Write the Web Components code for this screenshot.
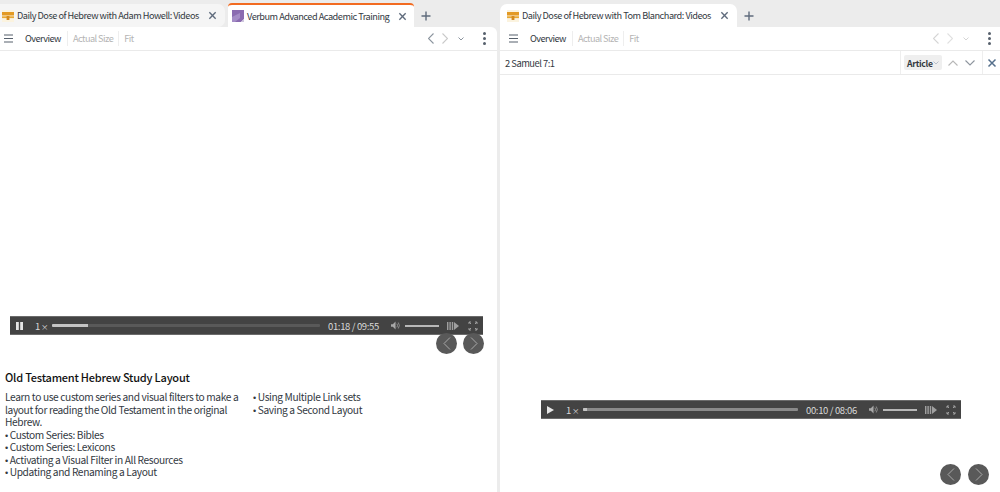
<!DOCTYPE html>
<html>
<head>
<meta charset="utf-8">
<title>Verbum</title>
<style>
  html, body { margin: 0; height: 100%; overflow: hidden; background: #fff; }
  body { font-family: "Noto Sans CJK SC", "Noto Sans", sans-serif; font-size: 10px; color: #333; }
  #app { display: flex; width: 1000px; height: 492px; background: #ececec; }
</style>
</head>
<body>
<div id="app">
  <doc-pane style="width:497px">
    <tab-strip slot="tabs">
      <app-tab icon="book" kind="back" style="width:225px">Daily Dose of Hebrew with Adam Howell: Videos</app-tab>
      <app-tab icon="verbum" kind="accent" style="width:186px">Verbum Advanced Academic Training</app-tab>
    </tab-strip>
    <pane-toolbar round></pane-toolbar>
    <left-content></left-content>
  </doc-pane>
  <pane-split></pane-split>
  <doc-pane style="width:500px">
    <tab-strip slot="tabs">
      <app-tab icon="book" kind="front" style="width:237px">Daily Dose of Hebrew with Tom Blanchard: Videos</app-tab>
    </tab-strip>
    <pane-toolbar dim></pane-toolbar>
    <ref-bar>2 Samuel 7:1</ref-bar>
    <right-content></right-content>
  </doc-pane>
</div>
<script>
// small helper so every component gets an open shadow root from a string
class Base extends HTMLElement {
  constructor() {
    super();
    this.attachShadow({ mode: 'open' });
  }
  connectedCallback() {
    this.shadowRoot.innerHTML = this.render();
  }
}

const closeX = (c, s) => `<svg width="${s}" height="${s}" viewBox="0 0 10 10" fill="none" stroke="${c}" stroke-width="1.5"><path d="M1.5 1.5l7 7M8.5 1.5l-7 7"/></svg>`;

class DocPane extends Base {
  render() {
    return `<style>
      :host { display: flex; flex-direction: column; height: 100%; min-width: 0; background: #ececec; }
    </style><slot name="tabs"></slot><slot></slot>`;
  }
}

class PaneSplit extends Base {
  render() {
    return `<style>:host { display: block; width: 3px; height: 100%; background: #ececec; }</style>`;
  }
}

class TabStrip extends Base {
  render() {
    return `<style>
      :host { display: flex; align-items: flex-end; gap: 3px; height: 27px; background: #ececec; flex: none; }
      .plus { width: 23px; height: 23px; margin-left: -3px; display: flex; align-items: center; justify-content: center; }
    </style><slot></slot>
    <div class="plus"><svg width="10" height="10" viewBox="0 0 10 10" fill="none" stroke="#5f6b7c" stroke-width="1.4"><path d="M5 .5v9M.5 5h9"/></svg></div>`;
  }
}

class AppTab extends Base {
  render() {
    const kind = this.getAttribute('kind');
    const icon = this.getAttribute('icon') === 'book'
      ? `<svg class="i" width="12" height="12" viewBox="0 0 12 12"><rect width="12" height="12" fill="#fbf3df"/><rect y="2" width="12" height="3.5" fill="#e39a24"/><rect y="6.3" width="12" height="1.8" fill="#e8a834"/><rect x="4.6" y="6" width="2.8" height="4" fill="#d58a1c"/></svg>`
      : `<svg class="i" width="12" height="12" viewBox="0 0 12 12"><path d="M0 0h12v9l-3 3H0z" fill="#8a6bb0"/><path d="M0 7l8-4v5L3 12H0z" fill="#a48cc6"/><path d="M9 12l3-3v3z" fill="#cfc7dd"/></svg>`;
    const box = {
      back: 'background:#f5f5f5; padding:0 8px 0 2px; border-radius:0 7px 7px 0; height:23px;',
      accent: 'background:#fff; padding:0 7px 0 4px; border-radius:4px 4px 0 0; height:24px; border-top:2.5px solid #f26b21;',
      front: 'background:#fff; padding:0 8px 0 7px; border-radius:7px 7px 0 0; height:23px;'
    }[kind];
    return `<style>
      :host { display: flex; align-items: center; box-sizing: border-box; flex: none; color: #33393f; white-space: nowrap; ${box} }
      .i { flex: none; }
      .t { flex: 1; margin: -1px 0 0 3px; font-size: 9.2px; letter-spacing: -.49px; }
      .x { display: flex; }
    </style>${icon}<span class="t"><slot></slot></span><span class="x">${closeX('#5f6b7c', 9)}</span>`;
  }
}

class PaneToolbar extends Base {
  render() {
    const dim = this.hasAttribute('dim');
    const c = dim ? '#d5d5d5' : '#8b949e';
    const c2 = dim ? '#e0e0e0' : '#c9c9c9';
    return `<style>
      :host { display: flex; align-items: center; height: 24px; flex: none; box-sizing: border-box; background: #fff; border-bottom: 1px solid #eaeaea; padding-left: ${dim ? 9 : 4}px; font-size: 9.2px; letter-spacing: -.55px; }
      :host([round]) { border-top-right-radius: 6px; }
      .menu { display: flex; margin-right: 12px; }
      .o { color: #33393f; padding-right: 6px; border-right: 1px solid #eee; height: 15px; line-height: 15px; }
      .d { color: #b4b4b4; padding: 0 5px; border-right: 1px solid #eee; height: 15px; line-height: 15px; }
      .e { border: 0; }
      .sp { flex: 1; }
      .nav { display: flex; align-items: center; gap: 8px; margin-right: 19px; }
      .dots { display: flex; flex-direction: column; gap: 2px; margin-right: ${dim ? 9.5 : 11}px; }
      .dots i { width: 3px; height: 3px; border-radius: 50%; background: #56606c; }
    </style>
    <span class="menu"><svg width="9" height="9" viewBox="0 0 9 9" stroke="#56606c" stroke-width="1.2"><path d="M0 1h9M0 4.5h9M0 8h9"/></svg></span>
    <span class="o">Overview</span><span class="d">Actual Size</span><span class="d e">Fit</span>
    <span class="sp"></span>
    <span class="nav">
      <svg width="6" height="11" viewBox="0 0 6 11" fill="none" stroke="${c}" stroke-width="1.1"><path d="M5.5 .5l-5 5 5 5"/></svg>
      <svg width="6" height="11" viewBox="0 0 6 11" fill="none" stroke="${c2}" stroke-width="1.1"><path d="M.5 .5l5 5-5 5"/></svg>
      <svg style="margin-left:2px" width="6" height="4" viewBox="0 0 6 4" fill="none" stroke="${c}" stroke-width="1"><path d="M.5 .5l2.5 2.5 2.5-2.5"/></svg>
    </span>
    <span class="dots"><i></i><i></i><i></i></span>`;
  }
}

class RefBar extends Base {
  render() {
    return `<style>
      :host { display: flex; align-items: center; height: 24px; flex: none; box-sizing: border-box; background: #fff; border-bottom: 1px solid #eaeaea; padding-left: 5px; font-size: 9.4px; letter-spacing: -.5px; color: #33393f; }
      .t { flex: 1; }
      .r { display: flex; align-items: center; height: 100%; border-left: 1px solid #eee; padding-left: 3px; }
      .pick { display: flex; align-items: center; justify-content: space-between; box-sizing: border-box; width: 38px; height: 15px; padding: 0 3px; border-radius: 2px; background: #efefef; font-size: 8.6px; font-weight: 700; letter-spacing: -.3px; color: #33393f; }
      .ar { display: flex; gap: 7px; margin: 0 7px 0 6px; }
      .x { display: flex; align-items: center; justify-content: center; width: 17px; height: 100%; border-left: 1px solid #eee; }
    </style>
    <span class="t"><slot></slot></span>
    <span class="r">
      <span class="pick">Article <svg width="6" height="4" viewBox="0 0 6 4" fill="none" stroke="#b9c0cc" stroke-width="1"><path d="M.5 .5l2.5 2.5 2.5-2.5"/></svg></span>
      <span class="ar">
        <svg width="10" height="6" viewBox="0 0 10 6" fill="none" stroke="#b7b7b7" stroke-width="1.1"><path d="M.5 5.5l4.5-4.5 4.5 4.5"/></svg>
        <svg width="10" height="6" viewBox="0 0 10 6" fill="none" stroke="#8e959e" stroke-width="1.1"><path d="M.5 .5l4.5 4.5 4.5-4.5"/></svg>
      </span>
      <span class="x">${closeX('#56708c', 10)}</span>
    </span>`;
  }
}

class VideoBar extends Base {
  render() {
    const play = this.hasAttribute('playing')
      ? `<svg width="7" height="8" viewBox="0 0 7 8" fill="#e6e6e6"><rect width="2.8" height="8"/><rect x="4.2" width="2.8" height="8"/></svg>`
      : `<svg width="7" height="8" viewBox="0 0 7 8" fill="#e6e6e6"><path d="M0 0l7 4-7 4z"/></svg>`;
    const pct = this.getAttribute('pct');
    const buffered = this.hasAttribute('buffered') ? '#8a8a8a' : '#595959';
    return `<style>
      :host { display: flex; align-items: center; box-sizing: border-box; height: 19px; background: #434343; border: 1px solid #6b6b6b; border-width: 1px 0; color: #d9d9d9; font-size: 9.5px; letter-spacing: -.35px; padding: 0 5px 0 6px; }
      .speed { margin-left: 12px; width: 17px; white-space: nowrap; }
      .speed small { font-size: 7.5px; margin-left: 1px; }
      .track { flex: 1; height: 3px; margin: 0 8px 0 0; background: ${buffered}; border-radius: 1px; overflow: hidden; }
      .track i { display: block; height: 100%; width: ${pct}%; background: #c4c4c4; }
      .time { white-space: nowrap; width: 50px; margin-right: 13px; }
      .vol { display: flex; align-items: center; gap: 4px; }
      .vol b { display: block; width: 34px; height: 2px; background: #b8b8b8; }
      .ff { display: flex; margin-left: 8px; }
      .fs { display: flex; margin-left: 9px; }
    </style>
    ${play}
    <span class="speed">1<small>×</small></span>
    <span class="track"><i></i></span>
    <span class="time"><slot></slot></span>
    <span class="vol">
      <svg width="10" height="9" viewBox="0 0 11 9" fill="#a8a8a8"><path d="M0 3h2l3-3v9L2 6H0z"/><path d="M6.5 2.5q1.4 2 0 4M8 1.2q2.4 3.3 0 6.6" fill="none" stroke="#a8a8a8" stroke-width=".8"/></svg>
      <b></b>
    </span>
    <span class="ff"><svg width="12" height="8" viewBox="0 0 12 8" fill="#a0a0a0"><rect width="1.4" height="8"/><rect x="2.4" width="1.4" height="8"/><rect x="4.8" width="1.4" height="8"/><path d="M7 0l5 4-5 4z"/></svg></span>
    <span class="fs"><svg width="10" height="10" viewBox="0 0 10 10" fill="none" stroke="#a0a0a0" stroke-width="1"><path d="M3 3L1 1M1 3V1h2M7 3l2-2M7 1h2v2M3 7L1 9M1 7v2h2M7 7l2 2M9 7v2H7"/></svg></span>`;
  }
}

class NavCircles extends Base {
  render() {
    const btn = p => `<span class="c"><svg width="8" height="13" viewBox="0 0 8 13" fill="none" stroke="#a9a9a9" stroke-width="1"><path d="${p}"/></svg></span>`;
    return `<style>
      :host { display: flex; gap: var(--nav-gap, 7px); }
      .c { display: flex; align-items: center; justify-content: center; width: 21px; height: 21px; border-radius: 50%; background: #595959; }
    </style>${btn('M7 .5l-6 6 6 6')}${btn('M1 .5l6 6-6 6')}`;
  }
}

class LeftContent extends Base {
  render() {
    return `<style>
      :host { display: block; flex: 1; min-height: 0; background: #fff; }
      .video { height: 284px; display: flex; flex-direction: column; justify-content: flex-end; padding: 0 14px 0 10px; }
      .under { display: flex; justify-content: flex-end; height: 0; padding-right: 13px; --nav-gap: 6px; }
      .nav { margin-top: -2px; height: 21px; }
      study-note { margin-top: 35px; }
    </style>
    <div class="video"><video-bar playing pct="13.5">01:18 / 09:55</video-bar></div>
    <div class="under"><nav-circles class="nav"></nav-circles></div>
    <study-note></study-note>`;
  }
}

class RightContent extends Base {
  render() {
    return `<style>
      :host { display: flex; flex-direction: column; flex: 1; min-height: 0; background: #fff; }
      .video { height: 344px; flex: none; display: flex; flex-direction: column; justify-content: flex-end; padding: 0 39px 0 41px; }
      .under { display: flex; justify-content: flex-end; padding: 45px 11px 0 0; }
    </style>
    <div class="video"><video-bar pct="2" buffered>00:10 / 08:06</video-bar></div>
    <div class="under"><nav-circles></nav-circles></div>`;
  }
}

class StudyNote extends Base {
  render() {
    return `<style>
      :host { display: block; padding-left: 5px; color: #33393f; font-size: 10.2px; letter-spacing: -.37px; }
      h3 { margin: 0 0 6px; font-size: 11px; line-height: 15px; font-weight: 500; color: #111; letter-spacing: -.21px; }
      .cols { display: flex; gap: 8px; }
      .a { width: 240px; flex: none; }
      .a, .b { line-height: 12.5px; }
      .bu { font-family: "Liberation Sans", sans-serif; font-size: 9px; line-height: 0; }
    </style>
    <h3>Old Testament Hebrew Study Layout</h3>
    <div class="cols">
      <div class="a">Learn to use custom series and visual filters to make a layout for reading the Old Testament in the original Hebrew.<br><span class="bu">•</span> Custom Series: Bibles<br><span class="bu">•</span> Custom Series: Lexicons<br><span class="bu">•</span> Activating a Visual Filter in All Resources<br><span class="bu">•</span> Updating and Renaming a Layout</div>
      <div class="b"><span class="bu">•</span> Using Multiple Link sets<br><span class="bu">•</span> Saving a Second Layout</div>
    </div>`;
  }
}

customElements.define('doc-pane', DocPane);
customElements.define('pane-split', PaneSplit);
customElements.define('tab-strip', TabStrip);
customElements.define('app-tab', AppTab);
customElements.define('pane-toolbar', PaneToolbar);
customElements.define('ref-bar', RefBar);
customElements.define('video-bar', VideoBar);
customElements.define('nav-circles', NavCircles);
customElements.define('left-content', LeftContent);
customElements.define('right-content', RightContent);
customElements.define('study-note', StudyNote);
</script>
</body>
</html>
